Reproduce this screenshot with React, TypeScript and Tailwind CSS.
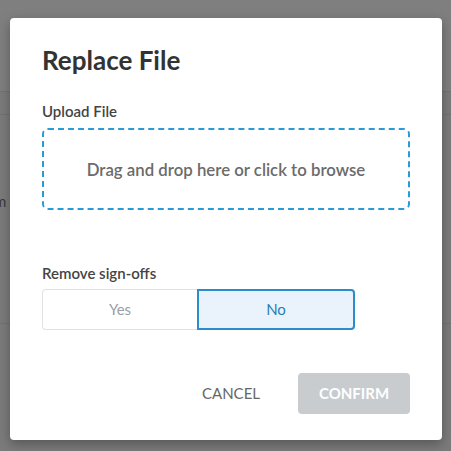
import { useState } from 'react';

export default function App() {
  const [removeSignOffs, setRemoveSignOffs] = useState(false);

  return (
    <div className="relative h-[451px] w-[451px] overflow-hidden bg-[#7b7b7b] font-['Lato','Liberation_Sans',sans-serif]">
      {/* Page behind the overlay */}
      <div className="flex flex-col">
        <div className="h-[92px] border-b border-[#737373] bg-[#7f7f7f]" />
        <div className="h-[23px] border-b border-[#737373]" />
        <div className="flex h-[209px] items-center border-b border-[#737373] pb-[36px]">
          <span className="-ml-[6px] text-[15px] text-[#3a3a3a]">m</span>
        </div>
      </div>

      {/* Dialog */}
      <div className="absolute left-[10px] top-[18px] flex h-[422px] w-[432px] flex-col rounded-[4px] bg-white px-[32px] pt-[27px] shadow-[0_4px_12px_rgba(0,0,0,0.3)]">
        <h1 className="text-[26px] font-bold leading-[1.2] text-[#333]">Replace File</h1>

        <label className="mt-[25px] text-[15px] font-semibold leading-[20px] text-[#444]">Upload File</label>
        <button className="mt-[7px] flex h-[82px] w-full items-center justify-center rounded-[6px] border-2 border-dashed border-[#2a9ad8] text-[16.8px] font-semibold text-[#6b6b6b]">
          Drag and drop here or click to browse
        </button>

        <label className="mt-[53px] text-[15px] font-semibold leading-[20px] text-[#444]">Remove sign-offs</label>
        <div className="mt-[6px] grid grid-cols-[155px_158px]">
          <button
            onClick={() => setRemoveSignOffs(true)}
            className={`h-[41px] rounded-l-[4px] text-[15px] ${
              removeSignOffs
                ? 'border-2 border-[#2b8ccb] bg-[#eaf3fb] text-[#2b7db6]'
                : 'border border-r-0 border-[#e2e2e2] bg-white text-[#9aa0a6]'
            }`}
          >
            Yes
          </button>
          <button
            onClick={() => setRemoveSignOffs(false)}
            className={`h-[41px] rounded-r-[4px] text-[15px] ${
              !removeSignOffs
                ? 'border-2 border-[#2b8ccb] bg-[#eaf3fb] text-[#2b7db6]'
                : 'border border-l-0 border-[#e2e2e2] bg-white text-[#9aa0a6]'
            }`}
          >
            No
          </button>
        </div>

        <div className="mt-[43px] flex items-center justify-end gap-[22px]">
          <button className="h-[41px] px-[16px] text-[15px] text-[#666]">CANCEL</button>
          <button disabled className="h-[41px] w-[112px] rounded-[4px] bg-[#c8cccf] text-[15px] font-bold text-white">
            CONFIRM
          </button>
        </div>
      </div>
    </div>
  );
}
